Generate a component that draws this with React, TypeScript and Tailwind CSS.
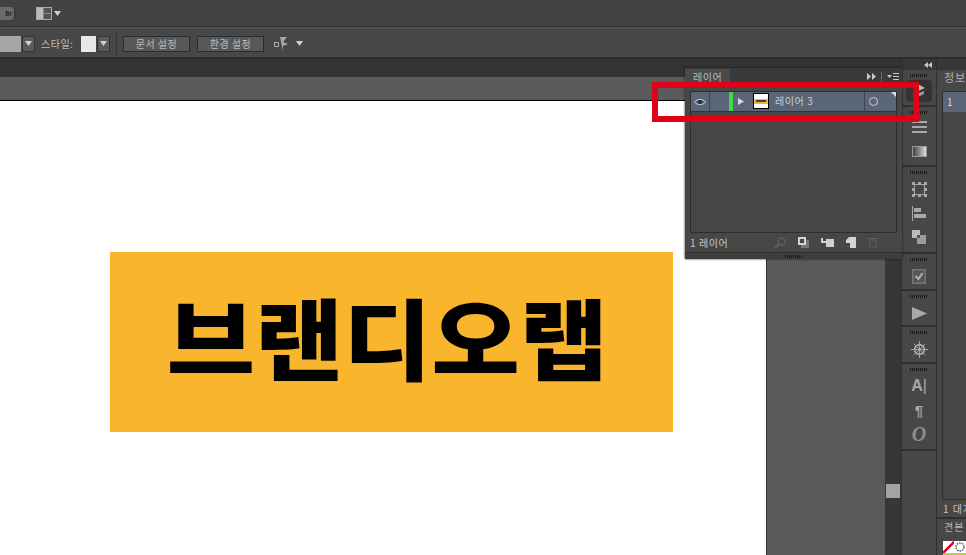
import React from 'react';

const FONT = "font-['Noto_Sans_CJK_KR','Noto_Sans',sans-serif]";

function Grip({ className = 'w-[18px]' }: { className?: string }) {
    return <div className={`h-[3px] mx-auto shrink-0 bg-[repeating-linear-gradient(90deg,#1a1a1a_0_1px,transparent_1px_2px)] ${className}`} />;
}

function Caret({ color = '#d0d0d0' }: { color?: string }) {
    return (
        <svg width="7" height="5" viewBox="0 0 7 5">
            <path d="M0 0h7L3.5 5z" fill={color} />
        </svg>
    );
}

function DockGroup({ children, h, tight }: { children: React.ReactNode; h: string; tight?: boolean }) {
    return (
        <div className={`flex flex-col items-center shrink-0 pt-[4px] border-b-2 border-[#303030] ${h}`}>
            <Grip />
            <div className={`shrink-0 ${tight ? 'h-[1px]' : 'h-[3px]'}`} />
            {children}
        </div>
    );
}

function DockIcon({ children }: { children: React.ReactNode }) {
    return <div className="w-full h-[24px] shrink-0 flex items-center justify-center">{children}</div>;
}

function Dock() {
    return (
        <div className="w-[36px] flex flex-col shrink-0 bg-[#474747] border-l border-r border-[#2f2f2f]">
            <div className="h-[11px] shrink-0 bg-[#373737] flex items-center justify-end pr-[4px]">
                <svg width="8" height="6" viewBox="0 0 8 6"><path d="M4 0L0 3l4 3zM8 0L4 3l4 3z" fill="#c8c8c8" /></svg>
            </div>
            <DockGroup h="h-[37px]">
                <div className="w-[26px] h-[22px] rounded-sm bg-[#333] flex items-center justify-center">
                    <svg width="14" height="18" viewBox="0 0 14 18">
                        <path d="M2 0l11 6-11 5z" fill="#b9b9b9" />
                        <path d="M2 13l10-4v3L2 17z" fill="#9a9a9a" />
                    </svg>
                </div>
            </DockGroup>
            <DockGroup h="h-[60px]" tight>
                <DockIcon>
                    <svg width="15" height="12" viewBox="0 0 15 12">
                        <path d="M0 0h15v2H0zM0 5h15v2H0zM0 10h15v2H0z" fill="#a8a8a8" />
                    </svg>
                </DockIcon>
                <DockIcon>
                    <div className="w-[15px] h-[11px] border border-[#999] bg-gradient-to-r from-[#444] to-[#ddd]" />
                </DockIcon>
            </DockGroup>
            <DockGroup h="h-[87px]">
                <DockIcon>
                    <svg width="15" height="15" viewBox="0 0 15 15">
                        <path d="M2.5 2.5h10v10h-10z" fill="none" stroke="#a8a8a8" />
                        <path d="M0 0h3v3H0zM6 0h3v2H6zM12 0h3v3h-3zM0 6h2v3H0zM13 6h2v3h-2zM0 12h3v3H0zM6 13h3v2H6zM12 12h3v3h-3z" fill="#a8a8a8" />
                    </svg>
                </DockIcon>
                <DockIcon>
                    <svg width="14" height="15" viewBox="0 0 14 15">
                        <path d="M0 0h1v15H0zM2 2h7v4H2zM2 8h12v4H2z" fill="#a8a8a8" />
                    </svg>
                </DockIcon>
                <DockIcon>
                    <svg width="14" height="14" viewBox="0 0 14 14">
                        <path d="M0 0h8v8H0z" fill="#bcbcbc" />
                        <path d="M5 5h9v9H5z" fill="#9c9c9c" />
                        <path d="M5 5h3v3H5z" fill="#555" />
                    </svg>
                </DockIcon>
            </DockGroup>
            <DockGroup h="h-[37px]">
                <DockIcon>
                    <svg width="14" height="15" viewBox="0 0 14 15">
                        <path d="M0 0h14v15H0z" fill="#777" />
                        <path d="M1.5 1.5h11v12h-11z" fill="#555" />
                        <path d="M3.5 7l3 3 4-6" fill="none" stroke="#b4b4b4" strokeWidth="2" />
                    </svg>
                </DockIcon>
            </DockGroup>
            <DockGroup h="h-[36px]">
                <DockIcon>
                    <svg width="15" height="13" viewBox="0 0 15 13">
                        <path d="M0 0l15 6.5L0 13z" fill="#a8a8a8" />
                    </svg>
                </DockIcon>
            </DockGroup>
            <DockGroup h="h-[37px]">
                <DockIcon>
                    <svg width="17" height="17" viewBox="0 0 18 18">
                        <circle cx="9" cy="9" r="5" fill="none" stroke="#a8a8a8" strokeWidth="2" />
                        <circle cx="9" cy="9" r="1.5" fill="#a8a8a8" />
                        <path d="M9 0v18M0 9h18M3 3l12 12M15 3L3 15" stroke="#a8a8a8" />
                    </svg>
                </DockIcon>
            </DockGroup>
            <DockGroup h="h-[87px]">
                <DockIcon>
                    <span className="text-[16px] leading-none font-bold text-[#a8a8a8] font-['Liberation_Sans',sans-serif]">A<span className="font-normal">|</span></span>
                </DockIcon>
                <DockIcon>
                    <span className="text-[15px] leading-none font-bold text-[#a8a8a8] font-['Liberation_Sans',sans-serif]">¶</span>
                </DockIcon>
                <DockIcon>
                    <span className="text-[20px] leading-none font-bold italic text-[#8e8e8e] font-['Liberation_Serif',serif]">O</span>
                </DockIcon>
            </DockGroup>
        </div>
    );
}

function SidePanel() {
    return (
        <div className={`flex-1 flex flex-col min-w-0 overflow-hidden bg-[#474747] ${FONT}`}>
            <div className="h-[11px] shrink-0 bg-[#373737]" />
            <div className="h-[14px] shrink-0 pl-[7px] text-[11px] leading-[14px] tracking-[1px] text-[#b4b4b4] whitespace-nowrap">정보</div>
            <div className="flex-1 min-h-0 pt-[7px] pl-[5px]">
                <div className="h-full border border-r-0 border-[#2f2f2f] bg-[#464646]">
                    <div className="h-[20px] bg-[#5a6577] pl-[4px] text-[10px] leading-[20px] text-[#d8d8d8]">1</div>
                </div>
            </div>
            <div className="h-[17px] shrink-0 pl-[6px] text-[10px] leading-[17px] tracking-[1px] text-[#c4c4c4] whitespace-nowrap">1 대지</div>
            <div className="h-[2px] shrink-0 bg-[#2f2f2f]" />
            <div className="h-[16px] shrink-0 pl-[7px] text-[10px] leading-[16px] tracking-[1px] text-[#b4b4b4] whitespace-nowrap">견본</div>
            <div className="h-[20px] shrink-0 pl-[6px] pt-[6px] flex items-start">
                <div className="w-[12px] h-[14px] bg-white border-b-2 border-[#b6d04a] overflow-hidden">
                    <svg width="12" height="12" viewBox="0 0 12 12"><path d="M0 12L12 0" stroke="#e00020" strokeWidth="2.5" /></svg>
                </div>
                <div className="w-[12px] h-[14px] bg-white border-b-2 border-[#b6d04a]">
                    <svg width="12" height="12" viewBox="0 0 12 12"><circle cx="6" cy="6" r="4" fill="none" stroke="#555" strokeWidth="1.5" strokeDasharray="1.5 1" /></svg>
                </div>
            </div>
        </div>
    );
}

function LayersPanel() {
    return (
        <div className={`absolute left-[685px] top-[68px] w-[217px] h-[191px] flex flex-col bg-[#474747] shadow-[0_0_2px_#111] ${FONT}`}>
            <div className="h-[16px] shrink-0 bg-[#3a3a3a] flex items-end justify-between pr-[3px]">
                <div className="h-[15px] w-[45px] bg-[#4a4a4a] pl-[8px] text-[10px] leading-[15px] tracking-[0.5px] text-[#bcbcbc] whitespace-nowrap">레이어</div>
                <div className="flex items-center gap-[5px] h-[15px]">
                    <svg width="9" height="7" viewBox="0 0 9 7"><path d="M0 0l4 3.5L0 7zM5 0l4 3.5L5 7z" fill="#c8c8c8" /></svg>
                    <div className="w-px h-[10px] bg-[#6a6a6a]" />
                    <svg width="12" height="8" viewBox="0 0 12 8"><path d="M0 2h5L2.5 5zM6 0h6v1H6zM6 3h6v1H6zM6 6h6v1H6z" fill="#c8c8c8" /></svg>
                </div>
            </div>
            <div className="flex-1 min-h-0 mx-[5px] mt-[7px] border border-[#2d2d2d] bg-[#464646]">
                <div className="h-[20px] flex items-stretch bg-[#5a6577] border-b border-[#333]">
                    <div className="w-[19px] border-r border-[#3c4450] flex items-center justify-center">
                        <svg width="12" height="8" viewBox="0 0 12 8">
                            <path d="M0.5 4C3 0.5 9 0.5 11.5 4 9 7.5 3 7.5 0.5 4z" fill="none" stroke="#d0d0d0" />
                            <circle cx="6" cy="4" r="2" fill="#2a2a2a" />
                        </svg>
                    </div>
                    <div className="w-[19px]" />
                    <div className="w-[4px] bg-[#43d84c]" />
                    <div className="w-[20px] flex items-center justify-center pr-[4px]">
                        <svg width="6" height="7" viewBox="0 0 6 7"><path d="M0 0l6 3.5L0 7z" fill="#d8d8d8" /></svg>
                    </div>
                    <div className="w-[16px] h-[16px] mt-[1px] bg-white flex items-center border border-black">
                        <div className="w-full h-[5px] bg-[#f9b62c] flex items-center justify-center">
                            <div className="w-[10px] h-[2px] bg-[#444]" />
                        </div>
                    </div>
                    <div className="flex-1 pl-[6px] text-[10px] leading-[18px] tracking-[0.6px] text-[#d0d0d0] whitespace-nowrap">레이어 3</div>
                    <div className="w-[32px] relative border-l border-[#3c4450] flex items-center pl-[4px]">
                        <div className="w-[9px] h-[9px] rounded-full border border-[#cfcfcf]" />
                        <svg className="absolute right-0 top-0" width="5" height="5" viewBox="0 0 5 5"><path d="M0 0h5v5z" fill="#e0e0e0" /></svg>
                    </div>
                </div>
            </div>
            <div className="h-[19px] shrink-0 flex items-center justify-between pl-[5px] pr-[24px] text-[10px] tracking-[0.6px] text-[#c8c8c8] whitespace-nowrap">
                <span>1 레이어</span>
                <div className="flex items-center gap-[12px]">
                    <svg width="12" height="12" viewBox="0 0 12 12"><circle cx="7.5" cy="4.5" r="3.5" fill="none" stroke="#5e5e5e" strokeWidth="1.5" /><path d="M5 7l-4 4" stroke="#5e5e5e" strokeWidth="2" /></svg>
                    <svg width="11" height="11" viewBox="0 0 11 11"><path d="M3 3h8v8H3z" fill="#777" /><path d="M0 0h8v8H0z" fill="#d4d4d4" /><path d="M2 2h4v4H2z" fill="#474747" /></svg>
                    <svg width="13" height="10" viewBox="0 0 13 10"><path d="M5 1h8v8H5z" fill="#d0d0d0" /><path d="M0 0h2v3h3v2H0z" fill="#d0d0d0" /></svg>
                    <svg width="10" height="11" viewBox="0 0 10 11"><path d="M3 0h7v11H4V6H0V3z" fill="#d4d4d4" /></svg>
                    <svg width="10" height="11" viewBox="0 0 10 11"><path d="M0 1.5h10M2 3h6v8H2z" fill="none" stroke="#5e5e5e" /></svg>
                </div>
            </div>
            <div className="h-[7px] shrink-0 bg-[#3e3e3e] border-t border-[#2f2f2f] flex items-center">
                <Grip className="w-[18px]" />
            </div>
        </div>
    );
}

export default function App() {
    return (
        <div className={`relative w-[966px] h-[555px] overflow-hidden flex flex-col bg-[#474747] ${FONT}`}>
            <div className="h-[27px] shrink-0 flex items-center bg-[#424242] border-b border-[#333]">
                <div className="w-[15px] h-[13px] rounded-r-sm bg-[#6a6a6a] border-r border-[#333] text-[6px] leading-[13px] text-right pr-[2px] text-[#222] font-bold">Br</div>
                <div className="ml-[21px] flex items-center gap-[2px]">
                    <div className="w-[16px] h-[13px] border border-[#aaa] bg-[#888] flex gap-px">
                        <div className="w-[6px] h-full bg-[#bbb]" />
                        <div className="flex-1 flex flex-col gap-px">
                            <div className="flex-1 bg-[#555]" />
                            <div className="flex-1 bg-[#555]" />
                        </div>
                    </div>
                    <Caret />
                </div>
            </div>
            <div className="h-[32px] shrink-0 flex items-center pt-[2px] bg-[#474747] border-t border-[#555] border-b-2 border-b-[#2c2c2c] text-[10px] text-[#bcbcbc]">
                <div className="w-[21px] h-[16px] bg-[#a6a6a6]" />
                <div className="ml-px w-[13px] h-[16px] bg-[#5a5a5a] border border-[#333] flex items-center justify-center"><Caret /></div>
                <span className="ml-[6px] w-[34px] tracking-[0.5px] whitespace-nowrap">스타일:</span>
                <div className="ml-[6px] w-[15px] h-[16px] bg-[#e8e8e8]" />
                <div className="ml-px w-[13px] h-[16px] bg-[#5a5a5a] border border-[#333] flex items-center justify-center"><Caret /></div>
                <div className="ml-[6px] w-px h-[20px] bg-[#333]" />
                <div className="ml-[6px] w-[67px] h-[16px] border border-[#2c2c2c] bg-[#585858] text-center leading-[13px] tracking-[0.5px] whitespace-nowrap">문서 설정</div>
                <div className="ml-[7px] w-[67px] h-[16px] border border-[#2c2c2c] bg-[#585858] text-center leading-[13px] tracking-[0.5px] whitespace-nowrap">환경 설정</div>
                <div className="ml-[10px]">
                    <svg width="15" height="14" viewBox="0 0 15 14">
                        <path d="M0.5 5.5h4v4h-4z" fill="none" stroke="#b0b0b0" />
                        <path d="M6 0h7L9 5l5 2-5 2v5z" fill="#a8a8a8" />
                    </svg>
                </div>
                <div className="ml-[7px]"><Caret /></div>
            </div>
            <div className="flex-1 flex min-h-0">
                <div className="w-[901px] shrink-0 flex flex-col">
                    <div className="h-[18px] shrink-0 bg-[#333]" />
                    <div className="h-[24px] shrink-0 bg-[#5a5a5a] border-b border-black" />
                    <div className="flex-1 flex min-h-0">
                        <div className="w-[767px] shrink-0 bg-white border-r border-[#333]">
                            <div className="mt-[151px] ml-[110px] w-[563px] h-[180px] bg-[#f9b62c] flex items-center justify-center pb-[14px] pr-[8px]">
                                <span className="inline-block scale-x-[1.09] text-[88px] leading-none font-black text-black whitespace-nowrap">브랜디오랩</span>
                            </div>
                        </div>
                        <div className="w-[118px] shrink-0 bg-[#5a5a5a]" />
                        <div className="w-[16px] shrink-0 bg-[#373737] pt-[383px]">
                            <div className="w-[14px] h-[14px] mx-auto bg-[#a3a3a3]" />
                        </div>
                    </div>
                </div>
                <Dock />
                <SidePanel />
            </div>
            <LayersPanel />
            <div className="absolute left-[652px] top-[82px] w-[267px] h-[40px] border-[6px] border-[#e00018]" />
        </div>
    );
}
